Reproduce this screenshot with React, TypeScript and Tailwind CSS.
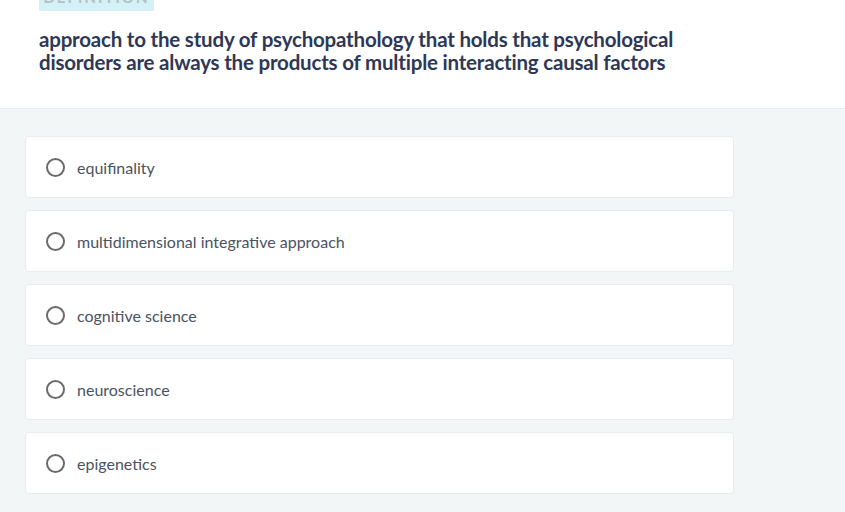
import React from 'react';

const options = [
  'equifinality',
  'multidimensional integrative approach',
  'cognitive science',
  'neuroscience',
  'epigenetics',
];

const App: React.FC = () => {
  return (
    <div className="min-h-screen w-[845px] bg-[#f3f6f7] font-['Lato','Liberation_Sans',sans-serif] overflow-hidden">
      {/* question header */}
      <div className="bg-white border-b border-[#eceff1] h-[109px] px-[39px]">
        <div className="w-[115px] h-[11px] bg-[#d3f1f6] overflow-hidden flex justify-center">
          <span className="text-[15px] leading-none font-bold tracking-[2px] text-[#b5c0c4] -mt-[10px]">DEFINITION</span>
        </div>
        <h1 className="mt-[17px] text-[20.5px] leading-[23px] font-bold text-[#2e3856] tracking-[-0.2px]">
          approach to the study of psychopathology that holds that psychological
          <br />
          disorders are always the products of multiple interacting causal factors
        </h1>
      </div>

      {/* answers */}
      <div className="flex flex-col gap-[12px] pt-[27px] pl-[25px] w-[734px]">
        {options.map((opt) => (
          <div
            key={opt}
            className="h-[62px] bg-white border border-[#e8ecef] rounded-[4px] flex items-center pl-[20px]"
          >
            <span className="w-[19px] h-[19px] rounded-full border-2 border-[#6b6b6b] shrink-0" />
            <span className="ml-[12px] text-[16px] text-[#4b5262] pt-[2px]">{opt}</span>
          </div>
        ))}
      </div>
    </div>
  );
};

export default App;
